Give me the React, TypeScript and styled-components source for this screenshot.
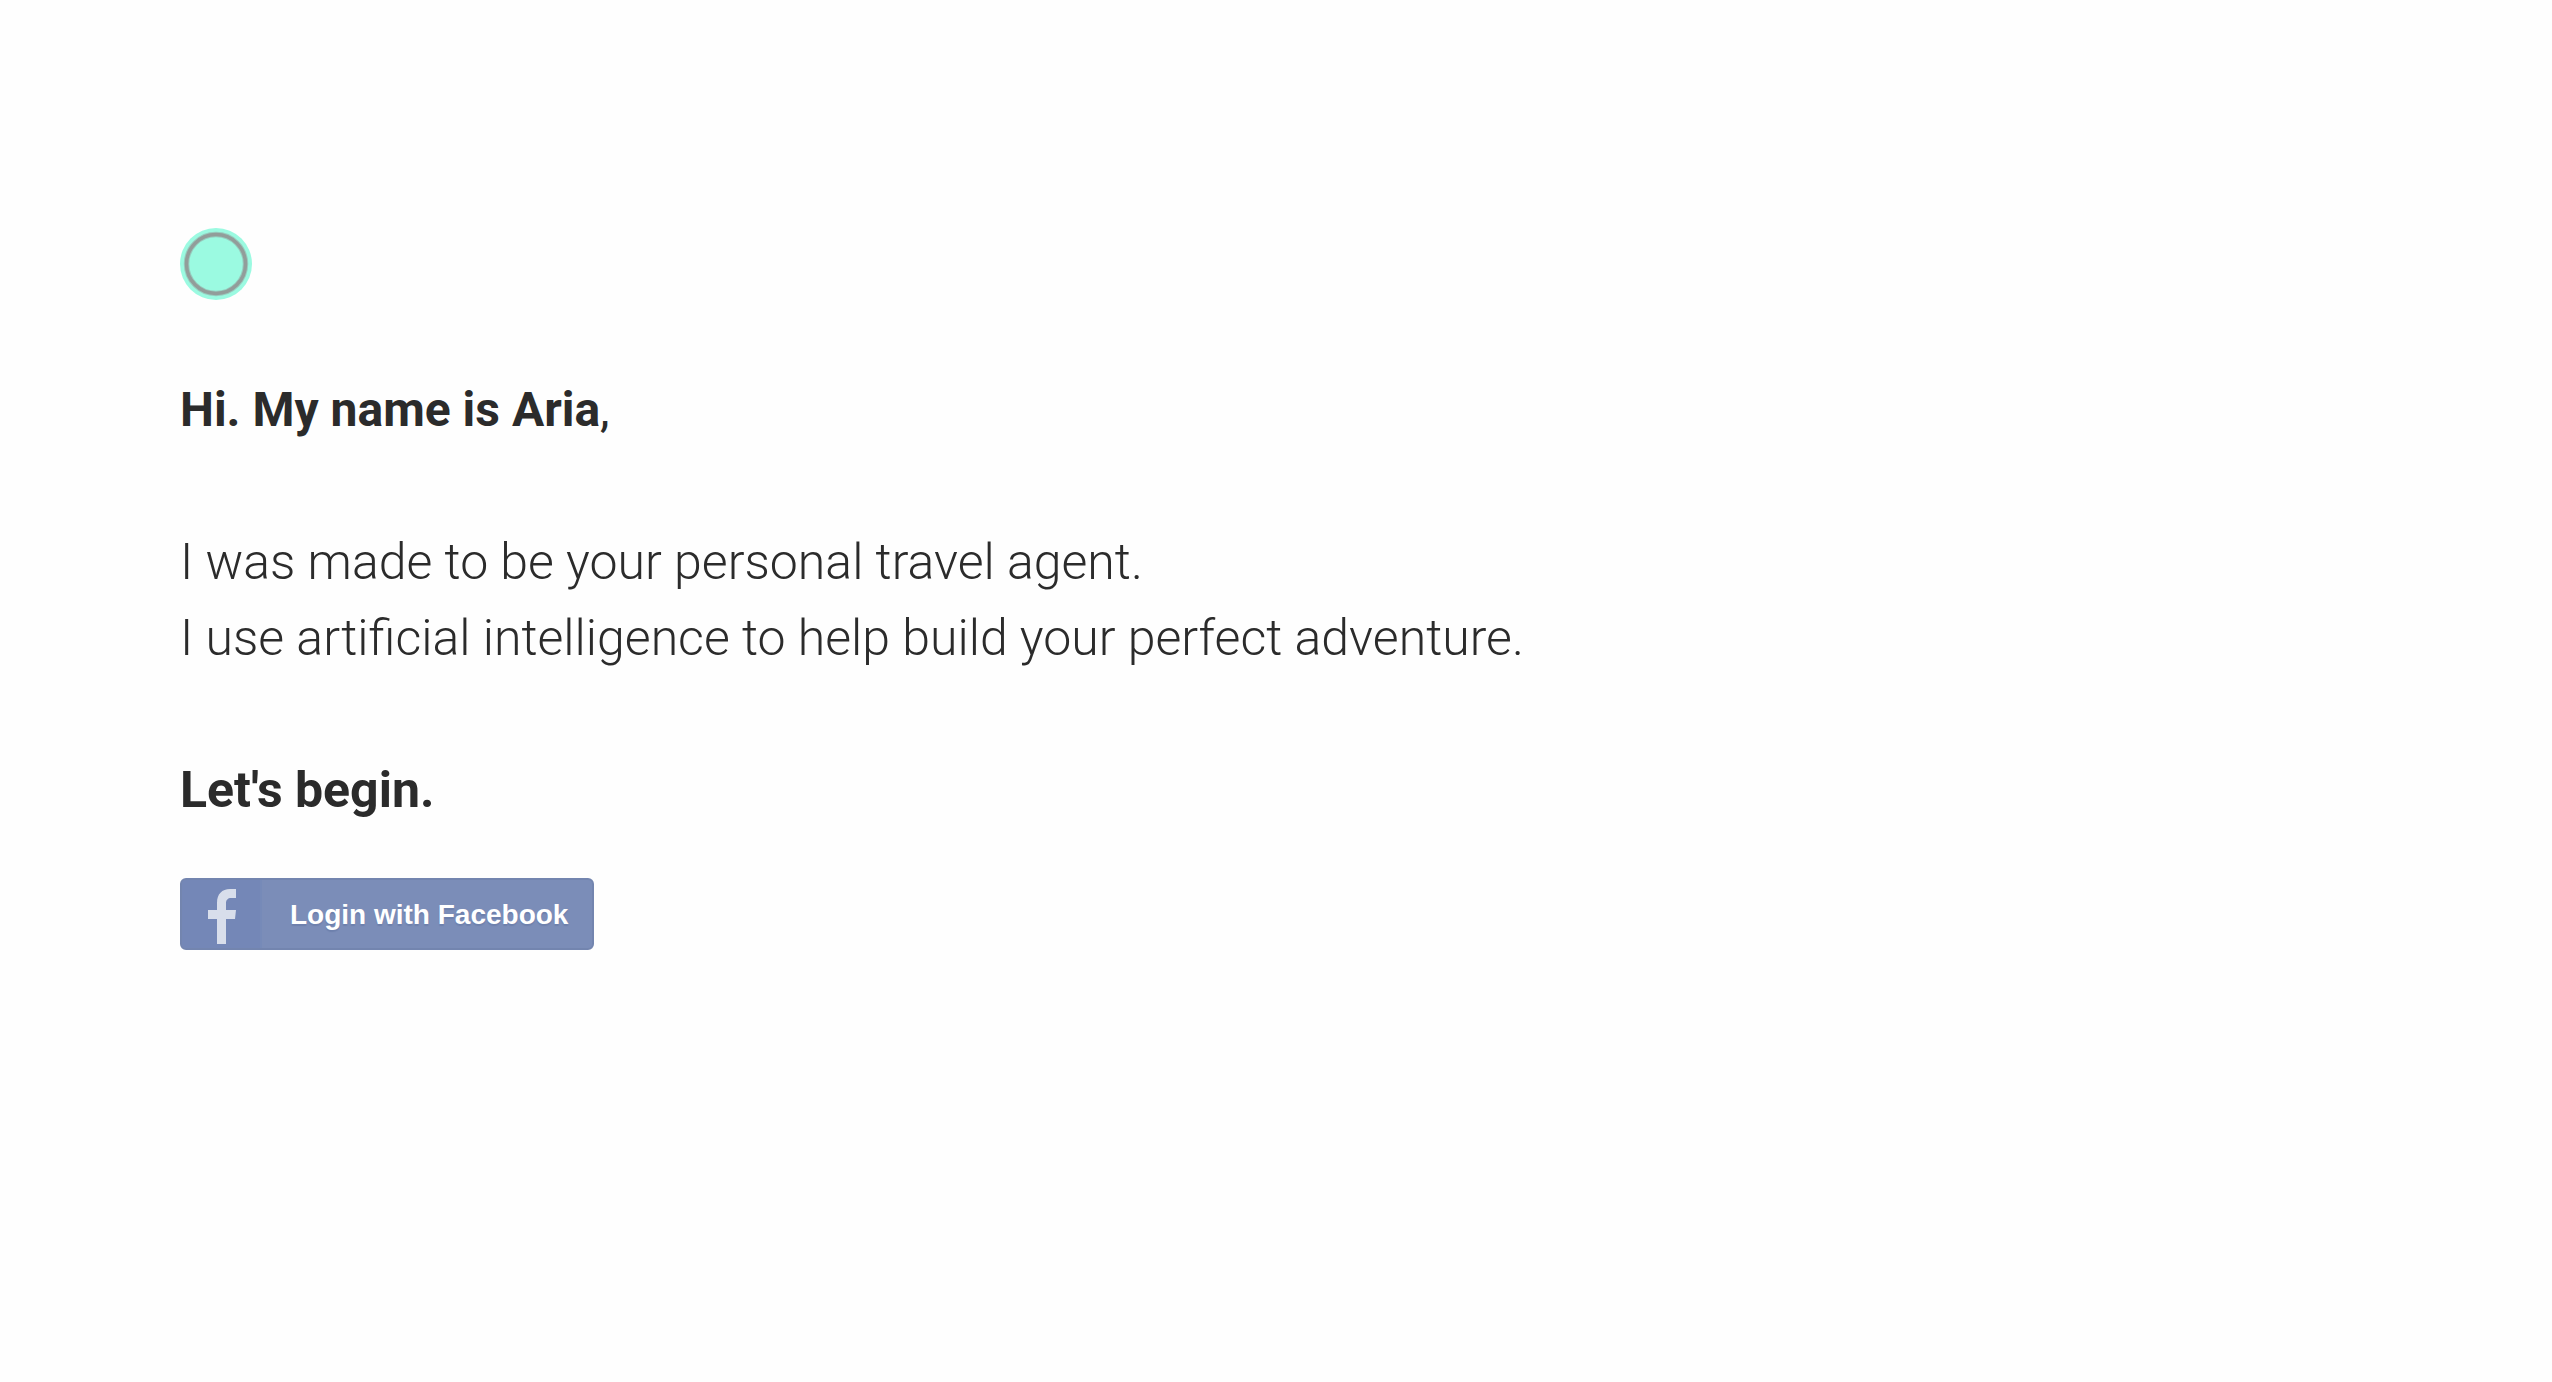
import React from "react";
import styled, { createGlobalStyle } from "styled-components";

const GlobalStyle = createGlobalStyle`
  *, *::before, *::after { box-sizing: border-box; }
  body {
    margin: 0;
    background: #fefefe;
    color: #2b2b2b;
    font-family: Roboto, "Liberation Sans", sans-serif;
  }
`;

const Page = styled.main`
  display: flex;
  flex-direction: column;
  align-items: flex-start;
  padding: 228px 180px 180px;
`;

const Orb = styled.svg`
  display: block;
  width: 72px;
  height: 72px;
`;

const Intro = styled.section`
  display: flex;
  flex-direction: column;
  gap: 76px;
  margin: 72px 0 50px;
`;

const Line = styled.p<{ $strong?: boolean }>`
  margin: 0;
  font-size: 50px;
  line-height: 76px;
  font-weight: ${({ $strong }) => ($strong ? 700 : 300)};
`;

const Heading = styled.h1`
  margin: 0;
  font-size: 48px;
  line-height: 76px;
  font-weight: 400;

  strong { font-weight: 700; }
`;

const LoginButton = styled.button`
  display: flex;
  align-items: stretch;
  height: 72px;
  padding: 0;
  overflow: hidden;
  border: 2px solid #7385af;
  border-radius: 6px;
  background: #7b8db8;
  color: #ffffff;
  cursor: pointer;
`;

const LogoCell = styled.span`
  display: flex;
  width: 80px;
  border-right: 2px solid #768ab8;
  background: #7487b7;

  svg { display: block; width: 78px; height: 68px; }
`;

const LoginLabel = styled.span`
  display: flex;
  align-items: center;
  padding: 2px 24px 0 28px;
  font: 700 28px/32px "Liberation Sans", Arial, sans-serif;
  text-shadow: 0 2px 1px rgba(60, 80, 130, 0.2);
`;

export default function App() {
  return (
    <>
      <GlobalStyle />
      <Page>
        <Orb viewBox="0 0 72 72" aria-hidden="true">
          <circle cx="36" cy="36" r="36" fill="#9bfae1" />
          <circle cx="36" cy="36" r="29.5" fill="none" stroke="#97ccbe" strokeWidth="5.5" />
          <circle cx="36" cy="36" r="29.5" fill="none" stroke="#929d9a" strokeWidth="3.5" />
        </Orb>
        <Intro>
          <Heading>
            <strong>Hi. My name is Aria</strong>,
          </Heading>
          <Line>
            I was made to be your personal travel agent.
            <br />
            I use artificial intelligence to help build your perfect adventure.
          </Line>
          <Line $strong>Let's begin.</Line>
        </Intro>
        <LoginButton type="button">
          <LogoCell>
            <svg viewBox="0 0 78 68" aria-hidden="true">
              <path
                d="M35 64V39H26V30H35V23C35 14 40 9 48 9H54V18H49C46 18 44 20 44 23V30H54L53 39H44V64Z"
                fill="#d8deeb"
              />
            </svg>
          </LogoCell>
          <LoginLabel>Login with Facebook</LoginLabel>
        </LoginButton>
      </Page>
    </>
  );
}
